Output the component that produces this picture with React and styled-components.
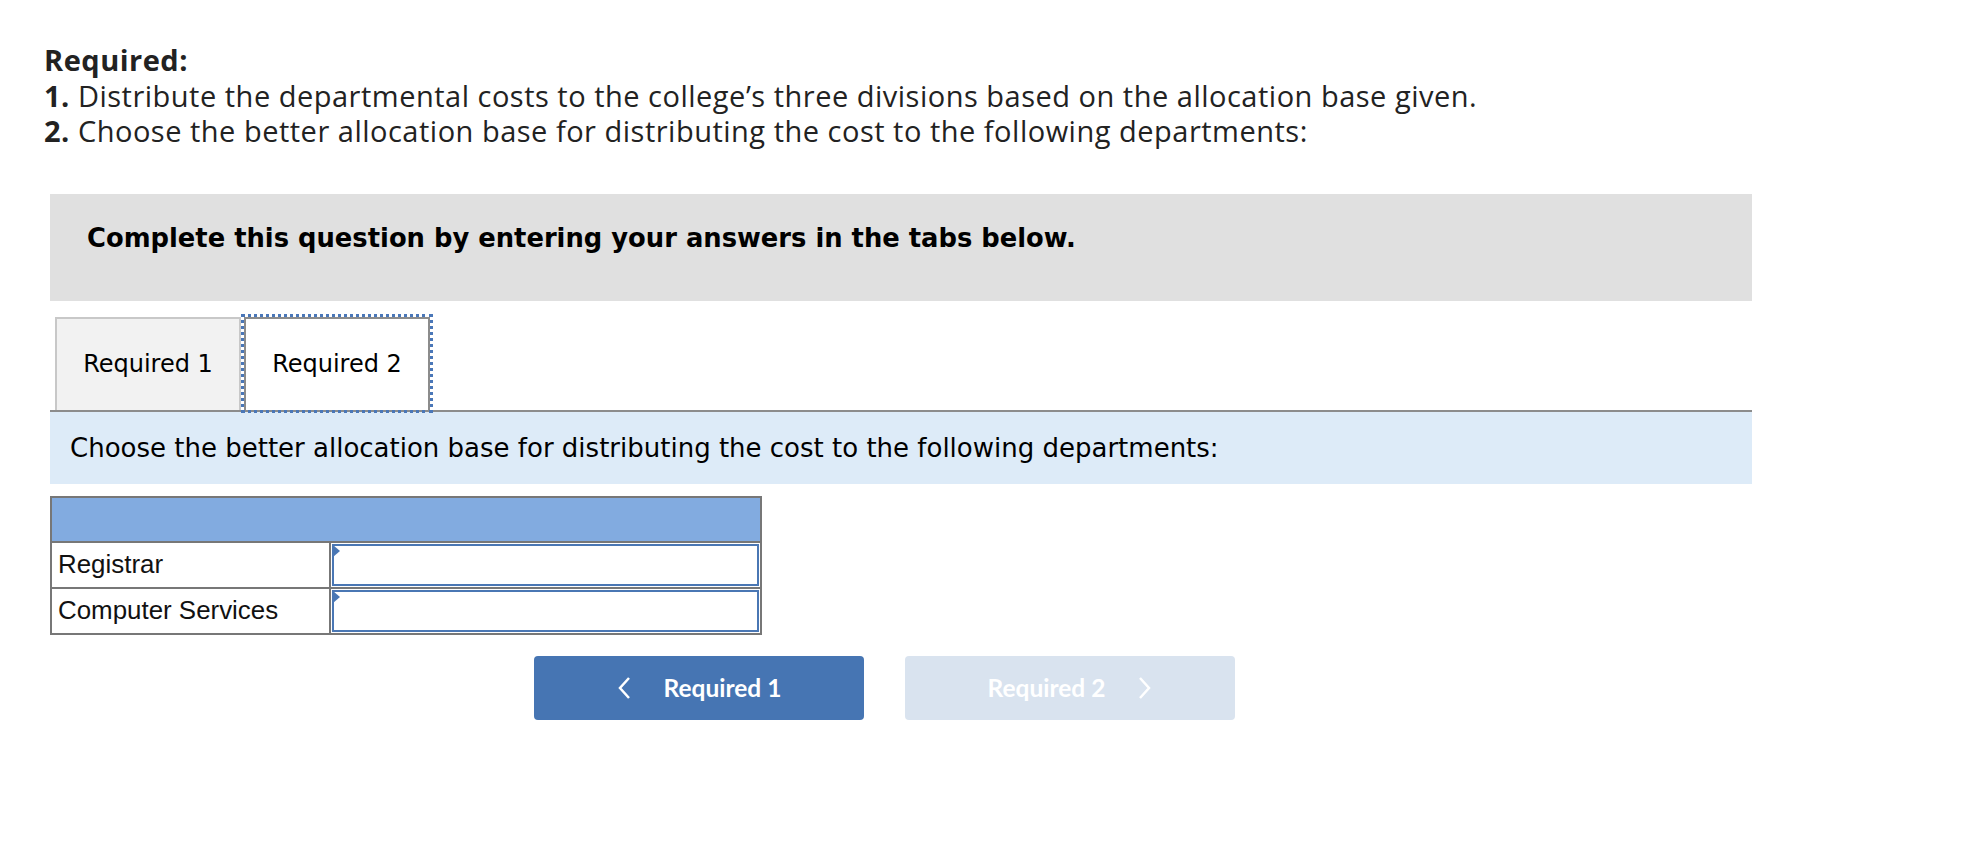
import React from "react";
import styled, { createGlobalStyle } from "styled-components";

const GlobalStyle = createGlobalStyle`
  html, body {
    margin: 0;
    padding: 0;
    background: #fff;
  }
`;

const Page = styled.div`
  width: 1968px;
  min-height: 864px;
  padding-top: 42px;
  box-sizing: border-box;
`;

const Header = styled.div`
  padding-left: 44px;
  font-family: "Open Sans", "Liberation Sans", sans-serif;
  font-size: 29px;
  letter-spacing: 0.5px;
  line-height: 35.5px;
  color: #222;
`;

const Line = styled.div``;

const Main = styled.div`
  margin: 45px 0 0 50px;
  width: 1702px;
`;

const Instructions = styled.div`
  height: 107px;
  box-sizing: border-box;
  padding: 28px 37px 0;
  background: #e0e0e0;
  font-family: "DejaVu Sans", Verdana, sans-serif;
  font-weight: 700;
  font-size: 25.8px;
  line-height: 32px;
  color: #000;
`;

const TabRow = styled.div`
  margin-top: 16px;
  padding-left: 5px;
  display: flex;
  align-items: flex-end;
  border-bottom: 2px solid #8c8c8c;
`;

const Tab = styled.div`
  width: 186px;
  height: 93px;
  box-sizing: border-box;
  margin-left: ${(p) => (p.$active ? "3px" : "0")};
  display: flex;
  align-items: center;
  justify-content: center;
  border: 2px solid ${(p) => (p.$active ? "#8c8c8c" : "#c8c8c8")};
  border-bottom: none;
  background: ${(p) => (p.$active ? "#fff" : "#f2f2f2")};
  outline: ${(p) => (p.$active ? "3px dotted #4a77b8" : "none")};
  font-family: "DejaVu Sans", Verdana, sans-serif;
  font-size: 24px;
  color: #000;
  cursor: pointer;
`;

const Prompt = styled.div`
  height: 72px;
  display: flex;
  align-items: center;
  padding-left: 20px;
  background: #ddebf8;
  font-family: "DejaVu Sans", Verdana, sans-serif;
  font-size: 26px;
  color: #000;
`;

const Table = styled.table`
  margin-top: 12px;
  width: 712px;
  border-collapse: collapse;
  table-layout: fixed;
  font-family: "Liberation Sans", Arial, sans-serif;
  font-size: 25.9px;
  color: #111;
`;

const LabelCol = styled.col`
  width: 279px;
`;

const HeadCell = styled.th`
  height: 43px;
  background: #82abe0;
  border: 2px solid #777;
  padding: 0;
`;

const LabelCell = styled.td`
  height: 42px;
  border: 2px solid #777;
  padding: 0 0 0 6px;
  text-align: left;
  white-space: nowrap;
`;

const InputCell = styled.td`
  border: 2px solid #777;
  padding: 1px;
  position: relative;

  &::before {
    content: "";
    position: absolute;
    top: 2px;
    left: 2px;
    border-top: 6px solid transparent;
    border-bottom: 6px solid transparent;
    border-left: 7px solid #4a77b4;
  }
`;

const Answer = styled.input`
  display: block;
  width: 100%;
  height: 42px;
  box-sizing: border-box;
  border: 2.5px solid #4a77b4;
  outline: none;
  background: #fff;
`;

const NavRow = styled.div`
  margin-top: 21px;
  padding-left: 484px;
  display: flex;
  gap: 41px;
`;

const NavButton = styled.button`
  width: 330px;
  height: 64px;
  border: none;
  border-radius: 4px;
  display: flex;
  align-items: center;
  justify-content: center;
  gap: 33px;
  background: ${(p) => (p.disabled ? "#d9e3ef" : "#4675b3")};
  color: #fff;
  font-family: Lato, "Liberation Sans", sans-serif;
  font-weight: 700;
  font-size: 24.5px;
  cursor: ${(p) => (p.disabled ? "default" : "pointer")};

  svg {
    flex: none;
  }
`;

const Chevron = ({ dir }) => (
  <svg width="14" height="22" viewBox="0 0 14 22">
    <polyline
      points={dir === "left" ? "12,1 3,11 12,21" : "2,1 11,11 2,21"}
      fill="none"
      stroke="#fff"
      strokeWidth="2.5"
    />
  </svg>
);

const rows = ["Registrar", "Computer Services"];

export default function App() {
  return (
    <Page>
      <GlobalStyle />
      <Header>
        <Line>
          <b>Required:</b>
        </Line>
        <Line>
          <b>1.</b> Distribute the departmental costs to the college’s three
          divisions based on the allocation base given.
        </Line>
        <Line>
          <b>2.</b> Choose the better allocation base for distributing the cost
          to the following departments:
        </Line>
      </Header>
      <Main>
        <Instructions>
          Complete this question by entering your answers in the tabs below.
        </Instructions>
        <TabRow>
          <Tab>Required 1</Tab>
          <Tab $active>Required 2</Tab>
        </TabRow>
        <Prompt>
          Choose the better allocation base for distributing the cost to the
          following departments:
        </Prompt>
        <Table>
          <colgroup>
            <LabelCol />
            <col />
          </colgroup>
          <thead>
            <tr>
              <HeadCell colSpan={2} />
            </tr>
          </thead>
          <tbody>
            {rows.map((r) => (
              <tr key={r}>
                <LabelCell>{r}</LabelCell>
                <InputCell>
                  <Answer type="text" />
                </InputCell>
              </tr>
            ))}
          </tbody>
        </Table>
        <NavRow>
          <NavButton>
            <Chevron dir="left" />
            Required 1
          </NavButton>
          <NavButton disabled>
            Required 2
            <Chevron dir="right" />
          </NavButton>
        </NavRow>
      </Main>
    </Page>
  );
}
